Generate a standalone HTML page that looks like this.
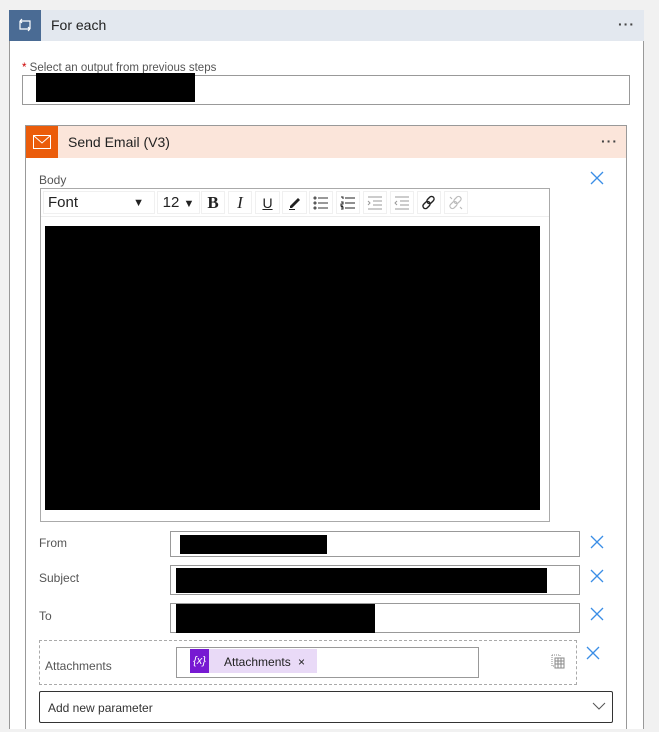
<!DOCTYPE html>
<html style="width:659px;height:732px;overflow:hidden"><head><meta charset="utf-8"><style>
*{box-sizing:border-box;margin:0;padding:0}
body{width:659px;height:732px;background:#f1f1f1;font-family:"Liberation Sans",sans-serif;position:relative;overflow:hidden;color:#333}
.a{position:absolute}
.lbl{font-size:12px;color:#555}
.x{position:absolute;width:14px;height:14px}
.tb{position:absolute;top:191px;height:23px;background:#fff;border:1px solid #f0f0f0;font-size:15px;color:#222;text-align:center;line-height:22px}
</style></head><body>
<div class="a" style="left:9px;top:10px;width:635px;height:722px;background:#fff;border-left:1px solid #999;border-right:1px solid #999"></div>
<div class="a" style="left:9px;top:10px;width:635px;height:31px;background:#e3e8ef"></div>
<div class="a" style="left:9px;top:10px;width:32px;height:31px;background:#4a6b94"></div>
<svg class="a" style="left:17px;top:18px" width="16" height="14" viewBox="0 0 16 14"><path d="M3 3V11H13M13 11l-2-2M13 11l-2 2M13 11V3H3M3 3l2-2M3 3l2 2" fill="none" stroke="#fff" stroke-width="1.2"/></svg>
<div class="a" style="left:51px;top:17px;font-size:14px;color:#222">For each</div>
<div class="a" style="left:618px;top:16px;font-size:14px;color:#444;letter-spacing:1px;font-weight:bold">···</div>
<div class="a lbl" style="left:22px;top:62px;font-size:11.5px"><span style="color:#c00">*</span> Select an output from previous steps</div>
<div class="a" style="left:22px;top:75px;width:608px;height:30px;border:1px solid #999;background:#fff"></div>
<div class="a" style="left:36px;top:73px;width:159px;height:29px;background:#000"></div>

<div class="a" style="left:25px;top:125px;width:602px;height:607px;border:1px solid #999;border-bottom:none;background:#fff"></div>
<div class="a" style="left:26px;top:126px;width:600px;height:32px;background:#fbe5da"></div>
<div class="a" style="left:26px;top:126px;width:32px;height:32px;background:#eb5c0a"></div>
<svg class="a" style="left:33px;top:135px" width="18" height="14" viewBox="0 0 18 14"><rect x="0.5" y="0.5" width="17" height="13" fill="none" stroke="#fff"/><path d="M0.5 0.5L9 8 17.5 0.5" fill="none" stroke="#fff"/></svg>
<div class="a" style="left:68px;top:134px;font-size:14px;color:#222">Send Email (V3)</div>
<div class="a" style="left:601px;top:133px;font-size:14px;color:#444;letter-spacing:1px;font-weight:bold">···</div>

<div class="a lbl" style="left:39px;top:173px">Body</div>
<svg class="x" style="left:590px;top:171px" viewBox="0 0 14 14"><path d="M1 1L13 13M13 1L1 13" stroke="#3a8ee6" stroke-width="1.3"/></svg>
<div class="a" style="left:40px;top:188px;width:510px;height:334px;border:1px solid #aaa;background:#fff"></div>
<div class="a" style="left:41px;top:216px;width:508px;height:1px;background:#eee"></div>
<div class="tb" style="left:43px;width:112px;text-align:left;padding-left:4px">Font<span style="position:absolute;right:10px;font-size:11px">▼</span></div>
<div class="tb" style="left:157px;width:43px">12 <span style="font-size:11px">▼</span></div>
<div class="tb" style="left:201px;width:24px;font-weight:bold;font-family:'Liberation Serif',serif;font-size:17px">B</div>
<div class="tb" style="left:228px;width:24px;font-style:italic;font-family:'Liberation Serif',serif;font-size:17px">I</div>
<div class="tb" style="left:255px;width:25px;text-decoration:underline;font-size:14px">U</div>
<div class="tb" style="left:282px;width:25px"><svg width="14" height="14" viewBox="0 0 14 14" style="margin-top:4px"><path d="M2 12L4 12 12 4 10 2 2 10Z" fill="#222"/><path d="M1 13.5H7" stroke="#222"/></svg></div>
<div class="tb" style="left:309px;width:24px"><svg width="16" height="14" viewBox="0 0 16 14" style="margin-top:4px" fill="none" stroke="#333"><circle cx="2" cy="2" r="1"/><circle cx="2" cy="7" r="1"/><circle cx="2" cy="12" r="1"/><path d="M5 2H15M5 7H15M5 12H15"/></svg></div>
<div class="tb" style="left:336px;width:24px"><svg width="16" height="14" viewBox="0 0 16 14" style="margin-top:4px" stroke="#222"><path d="M1 1H3V3M1 6H3V8H1V10H3M1 11H3V13H1M5 2H15M5 7H15M5 12H15" fill="none"/></svg></div>
<div class="tb" style="left:363px;width:24px"><svg width="16" height="14" viewBox="0 0 16 14" style="margin-top:4px" stroke="#999" fill="none"><path d="M1 1H15M6 5H15M6 9H15M1 13H15M1 5L3 7 1 9"/></svg></div>
<div class="tb" style="left:390px;width:24px"><svg width="16" height="14" viewBox="0 0 16 14" style="margin-top:4px" stroke="#999" fill="none"><path d="M1 1H15M6 5H15M6 9H15M1 13H15M3 5L1 7 3 9"/></svg></div>
<div class="tb" style="left:417px;width:24px"><svg width="16" height="16" viewBox="0 0 16 16" style="margin-top:3px" stroke="#222" fill="none" stroke-width="1.4"><rect x="7" y="1" width="5" height="8" rx="2.5" transform="rotate(45 9.5 5)"/><rect x="3" y="6" width="5" height="8" rx="2.5" transform="rotate(45 5.5 10)"/></svg></div>
<div class="tb" style="left:444px;width:24px"><svg width="16" height="16" viewBox="0 0 16 16" style="margin-top:3px" stroke="#bbb" fill="none" stroke-width="1.2"><rect x="7" y="1" width="5" height="8" rx="2.5" transform="rotate(45 9.5 5)"/><rect x="3" y="6" width="5" height="8" rx="2.5" transform="rotate(45 5.5 10)"/><path d="M2 2L4 4M12 12L14 14"/></svg></div>
<div class="a" style="left:45px;top:226px;width:495px;height:284px;background:#000"></div>

<div class="a lbl" style="left:39px;top:536px">From</div>
<div class="a" style="left:170px;top:531px;width:410px;height:26px;border:1px solid #999"></div>
<div class="a" style="left:180px;top:535px;width:147px;height:19px;background:#000"></div>
<svg class="x" style="left:590px;top:535px" viewBox="0 0 14 14"><path d="M1 1L13 13M13 1L1 13" stroke="#3a8ee6" stroke-width="1.3"/></svg>
<div class="a lbl" style="left:39px;top:571px">Subject</div>
<div class="a" style="left:170px;top:565px;width:410px;height:30px;border:1px solid #999"></div>
<div class="a" style="left:176px;top:568px;width:371px;height:25px;background:#000"></div>
<svg class="x" style="left:590px;top:569px" viewBox="0 0 14 14"><path d="M1 1L13 13M13 1L1 13" stroke="#3a8ee6" stroke-width="1.3"/></svg>
<div class="a lbl" style="left:39px;top:609px">To</div>
<div class="a" style="left:170px;top:603px;width:410px;height:30px;border:1px solid #999"></div>
<div class="a" style="left:176px;top:604px;width:199px;height:29px;background:#000"></div>
<svg class="x" style="left:590px;top:607px" viewBox="0 0 14 14"><path d="M1 1L13 13M13 1L1 13" stroke="#3a8ee6" stroke-width="1.3"/></svg>

<div class="a" style="left:39px;top:640px;width:538px;height:45px;border:1px dashed #aaa"></div>
<div class="a lbl" style="left:45px;top:659px">Attachments</div>
<div class="a" style="left:176px;top:647px;width:303px;height:31px;border:1px solid #999"></div>
<div class="a" style="left:190px;top:649px;width:127px;height:24px;background:#e9daf7"></div>
<div class="a" style="left:190px;top:649px;width:19px;height:24px;background:#7719d2;color:#fff;font-size:11px;line-height:24px;text-align:center;font-style:italic">{x}</div>
<div class="a" style="left:224px;top:655px;font-size:12px;color:#222">Attachments <span style="margin-left:4px">×</span></div>
<svg class="a" style="left:551px;top:654px" width="14" height="15" viewBox="0 0 14 15" fill="none" stroke="#888"><path d="M1 1H9V3M1 1V12H3" stroke-dasharray="1 1"/><rect x="4" y="4" width="9" height="10"/><path d="M4 7H13M4 10H13M7 4V14M10 4V14"/></svg>
<svg class="x" style="left:586px;top:646px" viewBox="0 0 14 14"><path d="M1 1L13 13M13 1L1 13" stroke="#3a8ee6" stroke-width="1.3"/></svg>

<div class="a" style="left:39px;top:691px;width:574px;height:32px;border:1px solid #333;border-radius:2px"></div>
<div class="a" style="left:48px;top:701px;font-size:12px;color:#333">Add new parameter</div>
<svg class="a" style="left:592px;top:702px" width="14" height="8" viewBox="0 0 14 8"><path d="M1 1L7 7 13 1" fill="none" stroke="#555"/></svg>
<div class="a" style="left:0;top:729px;width:659px;height:3px;background:#f1f1f1"></div>
</body></html>
